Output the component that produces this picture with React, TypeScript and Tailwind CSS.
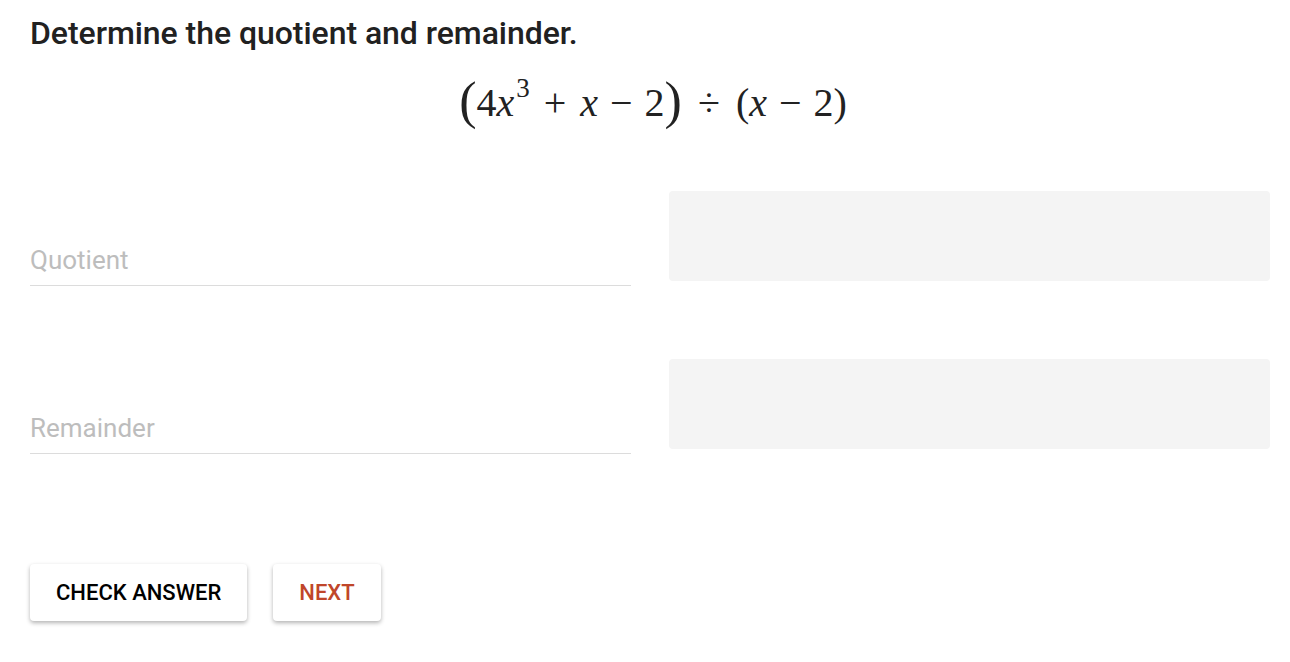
import React from 'react';

function MathLine() {
  return (
    <div className="flex items-center justify-center font-['Liberation_Serif',serif] text-[40px] leading-none text-[#222] mt-[20px] h-[62px] pl-[6px]">
      <span className="text-[52px] font-light leading-none -translate-y-[2px]">(</span>
      <span>4</span>
      <span className="italic">x</span>
      <span className="text-[27px] -translate-y-[15px] ml-[2px]">3</span>
      <span className="mx-[14px]">+</span>
      <span className="italic">x</span>
      <span className="mx-[12px]">−</span>
      <span>2</span>
      <span className="text-[52px] font-light leading-none -translate-y-[2px]">)</span>
      <span className="mx-[16px]">÷</span>
      <span>(</span>
      <span className="italic">x</span>
      <span className="mx-[12px]">−</span>
      <span>2</span>
      <span>)</span>
    </div>
  );
}

function AnswerRow({ label }: { label: string }) {
  return (
    <div className="grid grid-cols-2 gap-[38px] items-end">
      <div className="border-b border-[#dcdcdc] pb-[5px] mb-[-5px]">
        <span className="text-[26px] text-[#bdbdbd]">{label}</span>
      </div>
      <div className="h-[90px] rounded-[4px] bg-[#f4f4f4]" />
    </div>
  );
}

export default function App() {
  return (
    <div className="min-h-[662px] bg-white pl-[30px] pr-[20px] pt-[14px] font-['Roboto',sans-serif]">
      <h1 className="text-[32px] font-medium text-[#212121] leading-[38px] tracking-[-0.05px]">
        Determine the quotient and remainder.
      </h1>
      <MathLine />
      <div className="mt-[57px] flex flex-col gap-[78px]">
        <AnswerRow label="Quotient" />
        <AnswerRow label="Remainder" />
      </div>
      <div className="mt-[115px] flex gap-[26px]">
        <button className="h-[57px] px-[26px] rounded-[4px] bg-white text-[22px] font-medium text-black shadow-[0_2px_4px_rgba(0,0,0,0.3)]">
          CHECK ANSWER
        </button>
        <button className="h-[57px] px-[26px] rounded-[4px] bg-white text-[22px] font-medium text-[#c0462a] shadow-[0_2px_4px_rgba(0,0,0,0.3)]">
          NEXT
        </button>
      </div>
    </div>
  );
}
